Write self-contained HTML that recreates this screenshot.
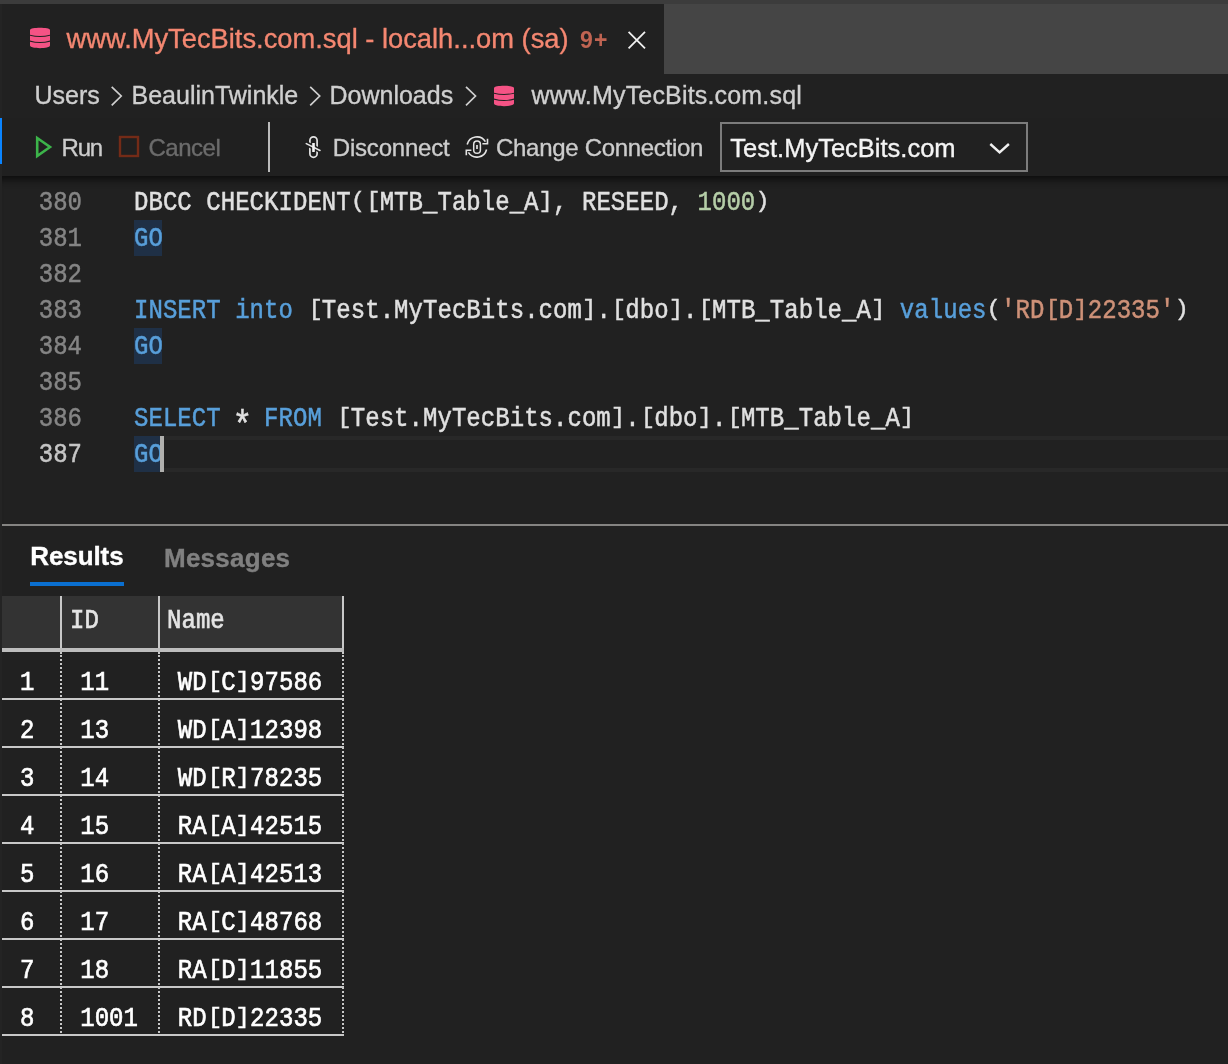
<!DOCTYPE html>
<html><head><meta charset="utf-8"><style>
*{box-sizing:border-box;margin:0;padding:0}
html,body{width:1228px;height:1064px;overflow:hidden;background:#212121}
body{position:relative;will-change:transform;font-family:"Liberation Sans",sans-serif;color:#ccc}
.abs{position:absolute}
svg{position:absolute;left:0;top:0;overflow:visible}
#topstrip{left:0;top:0;width:1228px;height:4px;background:#3c3c3c}
#leftstrip{left:0;top:4px;width:2px;height:1060px;background:#242424}
#tabbar{left:2px;top:4px;width:1226px;height:70px;background:#454545}
#tab{left:0;top:0;width:662px;border-right:0;height:70px;background:#212121}
.sans{position:absolute;white-space:pre;height:40px;line-height:40px;-webkit-text-stroke:0.35px}
#tabtitle{left:66.5px;top:19px;font-size:27.3px;color:#f48771}
#badge{left:580px;top:19.5px;font-size:23px;font-weight:bold;color:#c06452;letter-spacing:1.3px;-webkit-text-stroke:0}
.crumb{top:75px;font-size:25px;color:#cfcfcf}
#toolbar{left:2px;top:118px;width:1226px;height:58px;background:#202020}
#bluebar{left:0;top:118px;width:2px;height:46px;background:#0a84ff}
.tb{top:128px;font-size:24px;color:#cccccc}
#editor{left:2px;top:176px;width:1226px;height:348px;background:#212121;box-shadow:inset 0 11px 9px -8px #0a0a0a}
.mono{font-family:"Liberation Mono",monospace}
.ln,.cl,.g{position:absolute;white-space:pre;height:36px;line-height:36px;font-size:24px;letter-spacing:0.046px;transform:scaleY(1.15);transform-origin:0 24.4px;-webkit-text-stroke:0.45px}
.ln{left:0;width:80px;text-align:right;color:#858585;letter-spacing:0}
.cl{left:132px;color:#e0e0e0}
.k{color:#589fda}.n{color:#b5cea8}.s{color:#ce9178}
.hl{position:absolute;left:132px;width:28px;height:36px;background:#1f3046}
#panelborder{left:2px;top:524px;width:1226px;height:2px;background:#858482}
#results{left:30.3px;top:536.3px;font-size:26px;letter-spacing:-0.1px;font-weight:bold;color:#fff}
#messages{left:164px;top:538.2px;font-size:26px;letter-spacing:0.25px;font-weight:bold;color:#808080}
#underline{left:30px;top:582px;width:94px;height:4px;background:#0a6fd0}
#grid{left:2px;top:596px;width:342px;height:440px}
#ghead{left:0;top:0;width:342px;height:52px;background:#333}
.hb{position:absolute;top:0;width:2px;height:52px;background:#c8c8c8}
#gheadb{left:0;top:52px;width:342px;height:4px;background:#bdbdbd}
.vd{position:absolute;top:56px;width:0;height:384px;border-left:2px dotted #c8c8c8}
.hr{position:absolute;height:2px;background:#c8c8c8}
.g{color:#fff;-webkit-text-stroke:0.6px}
.mono b.l{left:1px}
.mono b{position:relative;font-weight:normal;display:inline-block;transform:translateY(-2.3px) scaleY(0.78);transform-origin:0 24.4px}
</style></head><body>
<div id="topstrip" class="abs"></div>
<div id="leftstrip" class="abs"></div>
<div id="tabbar" class="abs">
  <div id="tab" class="abs"></div>
</div>
<div id="tabtitle" class="sans">www.MyTecBits.com.sql - localh...om (sa)</div>
<div id="badge" class="sans">9+</div>
<div class="sans crumb" style="left:34.5px">Users</div>
<div class="sans crumb" style="left:131.5px">BeaulinTwinkle</div>
<div class="sans crumb" style="left:329.5px">Downloads</div>
<div class="sans crumb" style="left:531.5px;letter-spacing:0.18px">www.MyTecBits.com.sql</div>
<div id="toolbar" class="abs">
  <div class="abs" style="left:266px;top:4px;width:2px;height:50px;background:#bbb"></div>
  <div class="abs" style="left:718px;top:4px;width:308px;height:50px;border:2px solid #7c7c7c;background:#212121"></div>
</div>
<div id="bluebar" class="abs"></div>
<div class="sans tb" style="left:61.5px;letter-spacing:-1.2px">Run</div>
<div class="sans tb" style="left:148.5px;color:#6b6b6b;letter-spacing:-0.5px">Cancel</div>
<div class="sans tb" style="left:332.8px;letter-spacing:-0.2px">Disconnect</div>
<div class="sans tb" style="left:496px;letter-spacing:-0.3px">Change Connection</div>
<div class="sans tb" style="left:730.3px;color:#f4f4f4;font-size:25.5px;top:127.5px">Test.MyTecBits.com</div>
<div id="editor" class="abs mono">
  <div class="abs" style="left:132px;top:260px;width:1094px;height:36px;border-top:4px solid #282828;border-bottom:4px solid #282828"></div>
  <div class="hl" style="top:44px"></div><div class="hl" style="top:152px"></div><div class="hl" style="top:260px"></div>
  <div class="ln" style="top:9.5px">380</div>
  <div class="ln" style="top:45.5px">381</div>
  <div class="ln" style="top:81.5px">382</div>
  <div class="ln" style="top:117.5px">383</div>
  <div class="ln" style="top:153.5px">384</div>
  <div class="ln" style="top:189.5px">385</div>
  <div class="ln" style="top:225.5px">386</div>
  <div class="ln" style="top:261.5px;color:#c6c6c6">387</div>
  <div class="cl" style="top:9.5px">DBCC CHECKIDENT<b>(</b><b class="l">[</b>MTB_Table_A<b>]</b>, RESEED, <span class="n">1000</span><b>)</b></div>
  <div class="cl" style="top:45.5px"><span class="k">GO</span></div>
  <div class="cl" style="top:117.5px"><span class="k">INSERT</span> <span class="k">into</span> <b class="l">[</b>Test.MyTecBits.com<b>]</b>.<b class="l">[</b>dbo<b>]</b>.<b class="l">[</b>MTB_Table_A<b>]</b> <span class="k">values</span><b>(</b><span class="s">'RD<b class="l">[</b>D<b>]</b>22335'</span><b>)</b></div>
  <div class="cl" style="top:153.5px"><span class="k">GO</span></div>
  <div class="cl" style="top:225.5px"><span class="k">SELECT</span> <span style="display:inline-block;width:14.448px;height:10px;position:relative;vertical-align:baseline"><span style="position:absolute;left:-2.6px;top:-5.8px;font-size:33px;line-height:36px;letter-spacing:0">*</span></span> <span class="k">FROM</span> <b class="l">[</b>Test.MyTecBits.com<b>]</b>.<b class="l">[</b>dbo<b>]</b>.<b class="l">[</b>MTB_Table_A<b>]</b></div>
  <div class="cl" style="top:261.5px"><span class="k">GO</span></div>
  <div class="abs" style="left:158px;top:260px;width:4px;height:36px;background:#b0b0ae"></div>
</div>
<div id="panelborder" class="abs"></div>
<div id="results" class="sans">Results</div>
<div id="messages" class="sans">Messages</div>
<div id="underline" class="abs"></div>
<div id="grid" class="abs mono">
  <div id="ghead" class="abs"></div>
  <div class="hb" style="left:58px"></div><div class="hb" style="left:156px"></div><div class="hb" style="left:340px"></div>
  <div id="gheadb" class="abs"></div>
  <div class="vd" style="left:58px"></div><div class="vd" style="left:156px"></div><div class="vd" style="left:340px"></div>
  <div class="g" style="left:68px;top:7.6px;color:#e4e4e4">ID</div>
  <div class="g" style="left:165px;top:7.6px;color:#e4e4e4">Name</div>
  <div class="hr" style="left:0;top:102px;width:342px"></div>
  <div class="g" style="left:18px;top:70px">1</div><div class="g" style="left:78.2px;top:70px">11</div><div class="g" style="left:175.8px;top:70px">WD<b class="l">[</b>C<b>]</b>97586</div>
  <div class="hr" style="left:0;top:150px;width:342px"></div>
  <div class="g" style="left:18px;top:118px">2</div><div class="g" style="left:78.2px;top:118px">13</div><div class="g" style="left:175.8px;top:118px">WD<b class="l">[</b>A<b>]</b>12398</div>
  <div class="hr" style="left:0;top:198px;width:342px"></div>
  <div class="g" style="left:18px;top:166px">3</div><div class="g" style="left:78.2px;top:166px">14</div><div class="g" style="left:175.8px;top:166px">WD<b class="l">[</b>R<b>]</b>78235</div>
  <div class="hr" style="left:0;top:246px;width:342px"></div>
  <div class="g" style="left:18px;top:214px">4</div><div class="g" style="left:78.2px;top:214px">15</div><div class="g" style="left:175.8px;top:214px">RA<b class="l">[</b>A<b>]</b>42515</div>
  <div class="hr" style="left:0;top:294px;width:342px"></div>
  <div class="g" style="left:18px;top:262px">5</div><div class="g" style="left:78.2px;top:262px">16</div><div class="g" style="left:175.8px;top:262px">RA<b class="l">[</b>A<b>]</b>42513</div>
  <div class="hr" style="left:0;top:342px;width:342px"></div>
  <div class="g" style="left:18px;top:310px">6</div><div class="g" style="left:78.2px;top:310px">17</div><div class="g" style="left:175.8px;top:310px">RA<b class="l">[</b>C<b>]</b>48768</div>
  <div class="hr" style="left:0;top:390px;width:342px"></div>
  <div class="g" style="left:18px;top:358px">7</div><div class="g" style="left:78.2px;top:358px">18</div><div class="g" style="left:175.8px;top:358px">RA<b class="l">[</b>D<b>]</b>11855</div>
  <div class="hr" style="left:0;top:438px;width:342px"></div>
  <div class="g" style="left:18px;top:406px">8</div><div class="g" style="left:78.2px;top:406px">1001</div><div class="g" style="left:175.8px;top:406px">RD<b class="l">[</b>D<b>]</b>22335</div>
</div>
<svg width="1228" height="1064" viewBox="0 0 1228 1064">
  <!-- tab db icon -->
  <g fill="#f55385" transform="translate(30,28)">
    <path d="M0 2 C0 -0.9 20 -0.9 20 2 V6.8 Q10 9.3 0 6.8 Z"/>
    <path d="M0 7.7 Q10 10.1 20 7.7 V12.4 Q10 15.8 0 12.4 Z"/>
    <path d="M0 13.7 Q10 16.3 20 13.7 V17.6 C20 21.1 0 21.1 0 17.6 Z"/>
  </g>
  <g fill="#f55385" transform="translate(494,86)">
    <path d="M0 2 C0 -0.9 20 -0.9 20 2 V6.8 Q10 9.3 0 6.8 Z"/>
    <path d="M0 7.7 Q10 10.1 20 7.7 V12.4 Q10 15.8 0 12.4 Z"/>
    <path d="M0 13.7 Q10 16.3 20 13.7 V17.6 C20 21.1 0 21.1 0 17.6 Z"/>
  </g>
  <!-- close X -->
  <path d="M628.6 31.9 L645 48.3 M645 31.9 L628.6 48.3" stroke="#f0f0f0" stroke-width="1.8" fill="none"/>
  <!-- chevrons -->
  <g stroke="#d0d0d0" stroke-width="1.7" fill="none">
    <path d="M111.7 86.8 L121.2 96 L111.7 105.3"/>
    <path d="M310.2 86.8 L319.7 96 L310.2 105.3"/>
    <path d="M466 86.8 L475.5 96 L466 105.3"/>
  </g>
  <!-- run -->
  <path d="M37.2 138 L50 147 L37.2 156 Z" stroke="#3cb44a" stroke-width="2.6" fill="none" stroke-linejoin="miter"/>
  <!-- cancel -->
  <rect x="120" y="137" width="18" height="19" stroke="#742b17" stroke-width="2.4" fill="none"/>
  <!-- disconnect -->
  <g fill="none" stroke="#e4e4e4">
    <rect x="309.9" y="136.9" width="7.2" height="20.4" rx="3.6" stroke-width="1.7"/>
    <path d="M306.3 143.6 L320 150.5" stroke="#1f1f1f" stroke-width="4.6"/>
    <path d="M306.3 143.6 L320 150.5" stroke-width="1.6" stroke-linecap="round"/>
    <rect x="312.2" y="143" width="2.6" height="9" fill="#f4f4f4" stroke="none"/>
  </g>
  <!-- change connection -->
  <g fill="none" stroke="#e4e4e4" stroke-width="1.6">
    <path d="M467.2 144.5 A10 10 0 0 1 485.4 141.6"/>
    <path d="M487.5 138.8 V143.7 H482.4"/>
    <path d="M486.6 149.5 A10 10 0 0 1 468.4 152.4"/>
    <path d="M466.3 155.2 V150.3 H471.4"/>
    <rect x="473.7" y="141.1" width="6.7" height="12.2" rx="3.35" stroke-width="1.5"/>
    <path d="M477 145 V149" stroke-width="1.7"/>
  </g>
  <!-- dropdown chevron -->
  <path d="M990.3 144 L999.6 152.3 L1008.9 144" stroke="#f0f0f0" stroke-width="2.4" fill="none"/>
</svg>
</body></html>
